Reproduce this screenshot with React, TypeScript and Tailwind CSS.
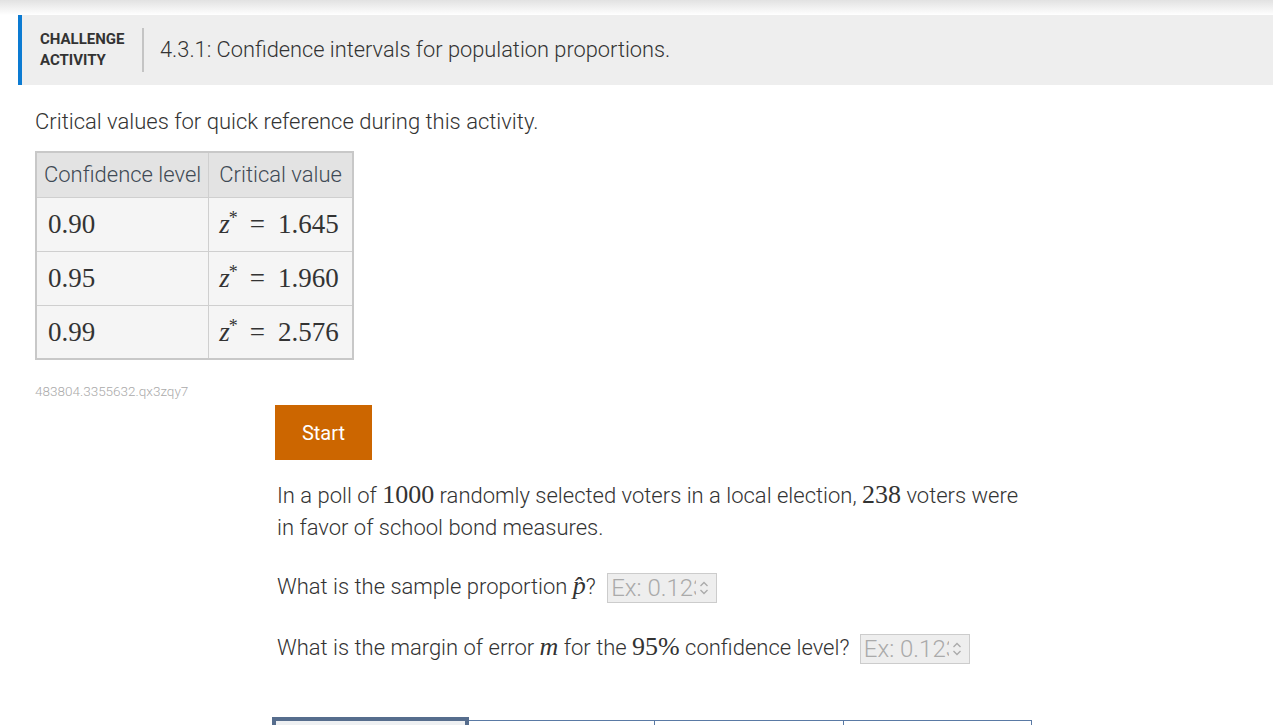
const ROWS = [
  { level: "0.90", value: "1.645" },
  { level: "0.95", value: "1.960" },
  { level: "0.99", value: "2.576" },
];

const SERIF = "font-['Liberation_Serif',serif]";

function Spinner() {
  return (
    <svg width="10" height="16" viewBox="0 0 10 16" className="ml-[3px] shrink-0">
      <path d="M1.5 6 L5 2.5 L8.5 6" fill="none" stroke="#aaa" strokeWidth="1.3" />
      <path d="M1.5 10 L5 13.5 L8.5 10" fill="none" stroke="#aaa" strokeWidth="1.3" />
    </svg>
  );
}

function NumberBox() {
  return (
    <span className="inline-flex h-[30px] w-[110px] items-center overflow-hidden border border-[#ccc] bg-[#eeeeee] pl-[3px] pr-[7px] align-middle">
      <span className="w-[86px] overflow-hidden whitespace-nowrap text-[24px] font-light leading-none text-[#aaa]">
        Ex: 0.123
      </span>
      <Spinner />
    </span>
  );
}

export default function App() {
  return (
    <div className="min-h-[725px] bg-white font-['Roboto',sans-serif] text-[#333]">
      {/* top shadow */}
      <div className="h-[15px] bg-gradient-to-b from-[#e2e2e2] to-white" />

      <div className="pl-[18px]">
        {/* header */}
        <div className="flex h-[70px] items-center border-l-4 border-[#0c7bd2] bg-[#eeeeee] pl-[18px]">
          <div className="w-[102px] text-[15px] font-bold leading-[21px] text-[#333]">
            CHALLENGE
            <br />
            ACTIVITY
          </div>
          <div className="h-[44px] w-[2px] bg-[#c4c4c4]" />
          <h1 className="pl-[16px] text-[21.8px] font-light text-[#333]">
            4.3.1: Confidence intervals for population proportions.
          </h1>
        </div>

        <div className="pl-[17px]">
          <p className="mt-[22px] text-[22px] font-light leading-[30px]">
            Critical values for quick reference during this activity.
          </p>

          <table className="mt-[14px] w-[317px] border-collapse border-2 border-[#c8c8c8] text-left">
            <thead>
              <tr className="h-[45px] bg-[#e3e3e3]">
                <th className="w-[171px] border border-[#cfcfcf] px-[7px] text-[22px] font-light whitespace-nowrap text-[#3f4a55]">
                  Confidence level
                </th>
                <th className="border border-[#cfcfcf] px-[10px] text-[22px] font-light whitespace-nowrap text-[#3f4a55]">
                  Critical value
                </th>
              </tr>
            </thead>
            <tbody>
              {ROWS.map((r) => (
                <tr key={r.level} className="h-[54px] bg-[#f5f5f5]">
                  <td className={`border border-[#cfcfcf] px-[11px] text-[27px] text-[#333] ${SERIF}`}>{r.level}</td>
                  <td className={`border border-[#cfcfcf] px-[10px] text-[27px] whitespace-nowrap text-[#333] ${SERIF}`}>
                    <i>z</i>
                    <span className="relative top-[-9px] ml-[-1px] text-[18px]">*</span>
                    <span className="pl-[12px] pr-[13px]">=</span>
                    {r.value}
                  </td>
                </tr>
              ))}
            </tbody>
          </table>

          <div className="mt-[23px] text-[13.5px] font-light leading-[16px] text-[#aaa]">
            483804.3355632.qx3zqy7
          </div>

          {/* activity area */}
          <div className="ml-[240px] w-[757px]">
            <button className="mt-[6px] h-[55px] w-[97px] bg-[#cc6600] text-[20px] text-white">Start</button>

            <p className="mt-[20px] pl-[2px] text-[22px] font-light leading-[32px]">
              In a poll of <span className={`text-[26px] leading-none ${SERIF}`}>1000</span> randomly selected voters in a
              local election, <span className={`text-[26px] leading-none ${SERIF}`}>238</span> voters were
              <br />
              in favor of school bond measures.
            </p>

            <p className="mt-[27px] pl-[2px] text-[22px] font-light leading-[32px]">
              What is the sample proportion <i className={`text-[26px] leading-none ${SERIF}`}>p̂</i>?{" "}
              <span className="ml-[6px]">
                <NumberBox />
              </span>
            </p>

            <p className="mt-[29px] pl-[2px] text-[22px] font-light leading-[32px]">
              What is the margin of error <i className={`text-[26px] leading-none ${SERIF}`}>m</i> for the{" "}
              <span className={`text-[26px] leading-none ${SERIF}`}>95%</span> confidence level?{" "}
              <span className="ml-[5px]">
                <NumberBox />
              </span>
            </p>

            {/* step tabs */}
            <div className="mt-[53px] ml-[-3px] flex h-[12px] items-start">
              <div className="h-[12px] w-[197px] border-x-4 border-t-4 border-[#566d8d] bg-[#eef0f2]" />
              <div className="mt-[3px] h-[9px] w-[185px] border-t border-[#5a7aa5]" />
              <div className="mt-[3px] h-[9px] w-[189px] border-l border-t border-[#5a7aa5]" />
              <div className="mt-[3px] h-[9px] w-[189px] border-x border-t border-[#5a7aa5]" />
            </div>
          </div>
        </div>
      </div>
    </div>
  );
}
